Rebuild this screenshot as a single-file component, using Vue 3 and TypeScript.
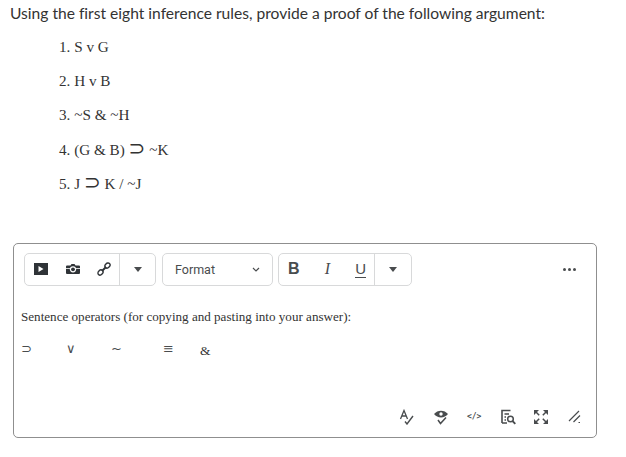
<template>
  <div class="page">
    <p class="title">Using the first eight inference rules, provide a proof of the following argument:</p>
    <ul class="premises">
      <li>1. S v G</li>
      <li>2. H v B</li>
      <li>3. ~S &amp; ~H</li>
      <li>4. (G &amp; B) <span class="horseshoe">⊃</span> ~K</li>
      <li>5. J <span class="horseshoe">⊃</span> K / ~J</li>
    </ul>

    <section class="editor">
      <div class="toolbar">
        <div class="group insert">
          <div class="tools">
            <svg class="icon" viewBox="0 0 14 14" width="14" height="14">
              <path d="M0 1h14v12H0z M4.500 4v6l5-3z" fill="#2f3337" fill-rule="evenodd" />
            </svg>
            <svg class="icon" viewBox="0 0 14 14" width="14" height="14">
              <path d="M4.500 3.500l1-1.500h3l1 1.500H13a1 1 0 0 1 1 1V11a1 1 0 0 1-1 1H1a1 1 0 0 1-1-1V4.500a1 1 0 0 1 1-1z" fill="#2f3337" />
              <path d="M0 6.500h14" stroke="#fff" stroke-width="0.800" />
              <circle cx="7" cy="7.300" r="3.100" fill="#fff" />
              <circle cx="7" cy="7.300" r="1.900" fill="#2f3337" />
            </svg>
            <svg class="icon" viewBox="0 0 14 14" width="14" height="14">
              <g fill="none" stroke="#2f3337" stroke-width="1.400">
                <ellipse cx="3.500" cy="10.500" rx="2.200" ry="2.800" transform="rotate(45 3.500 10.500)" />
                <ellipse cx="10.500" cy="3.500" rx="2.200" ry="2.800" transform="rotate(45 10.500 3.500)" />
                <path d="M5 9l4-4" stroke-width="2" />
              </g>
            </svg>
          </div>
          <div class="caret-cell"><span class="caret" /></div>
        </div>

        <div class="group format">
          <span>Format</span>
          <svg viewBox="0 0 8 5" width="8" height="5">
            <path d="M1 1l3 3 3-3" fill="none" stroke="#494c4e" stroke-width="1.200" />
          </svg>
        </div>

        <div class="group style">
          <div class="tools">
            <span class="bold">B</span>
            <span class="italic">I</span>
            <span class="underline">U</span>
          </div>
          <div class="caret-cell"><span class="caret" /></div>
        </div>

        <div class="more"><i /><i /><i /></div>
      </div>

      <div class="body">
        <p class="hint">Sentence operators (for copying and pasting into your answer):</p>
        <div class="operators">
          <span v-for="op in operators" :key="op.label" :class="op.cls">{{ op.label }}</span>
        </div>
      </div>

      <div class="status">
        <svg class="icon" viewBox="0 0 16 16" width="16" height="16">
          <path d="M1.500 10L5 1.500 8.500 10M2.800 7h4.400" fill="none" stroke="#494c4e" stroke-width="1.300" />
          <path d="M6 12.500l2 2.500 6-8" fill="none" stroke="#494c4e" stroke-width="1.400" />
        </svg>
        <svg class="icon" viewBox="0 0 16 16" width="16" height="16">
          <path d="M1 5c3.500-4.500 10.500-4.500 14 0-3.500 4.500-10.500 4.500-14 0z" fill="#494c4e" />
          <circle cx="8" cy="5" r="1.700" fill="#fff" />
          <path d="M5 11l2.500 3.500L13 8.500" fill="none" stroke="#494c4e" stroke-width="1.500" />
        </svg>
        <span class="code">&lt;/&gt;</span>
        <svg class="icon" viewBox="0 0 16 16" width="16" height="16">
          <path d="M2 14V1.500H10M2 1.500h8.500M4.500 5H9M4.500 8h1.500M4.500 11h1.500M2 14h5" fill="none" stroke="#494c4e" stroke-width="1.600" />
          <circle cx="10.500" cy="10" r="2.800" fill="none" stroke="#494c4e" stroke-width="1.500" />
          <path d="M12.500 12l2.800 2.800" stroke="#494c4e" stroke-width="1.800" />
        </svg>
        <svg class="icon" viewBox="0 0 16 16" width="16" height="16">
          <path d="M1 1h5L1 6z M15 1v5l-5-5z M1 15v-5l5 5z M15 15h-5l5-5z" fill="#494c4e" />
          <path d="M3 3l3.200 3.200M13 3L9.800 6.200M3 13l3.200-3.200M13 13L9.800 9.800" stroke="#494c4e" stroke-width="1.500" />
        </svg>
        <svg class="icon" viewBox="0 0 16 16" width="16" height="16">
          <path d="M2 12L12 2M6.500 13L13 6.500" fill="none" stroke="#494c4e" stroke-width="1.200" />
          <path d="M11.500 13.500h1.500" stroke="#494c4e" stroke-width="1.200" />
        </svg>
      </div>
    </section>
  </div>
</template>

<script setup lang="ts">
interface Operator {
  label: string
  cls: string
}

const operators: Operator[] = [
  { label: '⊃', cls: 'op-horseshoe' },
  { label: '∨', cls: 'op-vel' },
  { label: '~', cls: 'op-tilde' },
  { label: '≡', cls: 'op-equiv' },
  { label: '&', cls: 'op-amp' },
]
</script>

<style>
html,
body {
  background: #fff;
}
</style>

<style scoped>
.page {
  width: 626px;
  height: 457px;
  overflow: hidden;
  padding: 4px 0 0 10px;
  box-sizing: border-box;
  font-family: "Liberation Serif", serif;
  color: #333;
}

.title {
  margin: 0;
  font-family: Lato, sans-serif;
  font-size: 15.600px;
  font-variant-ligatures: none;
  line-height: 18px;
  white-space: nowrap;
  color: #333;
}

.premises {
  list-style: none;
  margin: 16px 0 0;
  padding: 0 0 0 49px;
  font-size: 15.200px;
  line-height: 18px;
}

.premises li {
  height: 18px;
  margin-bottom: 16.200px;
  white-space: nowrap;
}

.horseshoe {
  font-family: "DejaVu Sans", sans-serif;
  font-size: 20px;
  line-height: 0;
}

.editor {
  width: 584px;
  height: 195px;
  margin: 50px 0 0 3px;
  box-sizing: border-box;
  border: 1px solid #8f8f8f;
  border-radius: 5px;
  display: flex;
  flex-direction: column;
}

.toolbar {
  display: flex;
  align-items: center;
  gap: 6px;
  padding: 9px 10px 0;
}

.group {
  height: 33px;
  box-sizing: border-box;
  border: 1px solid #d8d9da;
  border-radius: 5px;
  display: flex;
  align-items: center;
}

.insert {
  width: 132px;
}

.format {
  width: 111px;
  justify-content: space-between;
  padding: 0 12px 0 12px;
  margin-right: -1px;
  font-family: Roboto, sans-serif;
  font-size: 12.500px;
  color: #494c4e;
}

.style {
  width: 134px;
}

.tools {
  flex: 1;
  height: 100%;
  display: flex;
  align-items: center;
  justify-content: space-between;
  padding: 0 8px 0 9px;
}

.caret-cell {
  width: 35px;
  height: 100%;
  border-left: 1px solid #d8d9da;
  display: flex;
  align-items: center;
  justify-content: center;
}

.style .caret-cell {
  width: 36px;
}

.caret {
  width: 0;
  height: 0;
  border-left: 4px solid transparent;
  border-right: 4px solid transparent;
  border-top: 5px solid #494c4e;
}

.icon {
  display: block;
}

.bold {
  font-family: "Liberation Sans", sans-serif;
  font-weight: 700;
  font-size: 16px;
  color: #494c4e;
}

.italic {
  font-family: "Liberation Serif", serif;
  font-style: italic;
  font-size: 16px;
  color: #494c4e;
}

.underline {
  font-family: "Liberation Sans", sans-serif;
  font-size: 15px;
  line-height: 16px;
  color: #494c4e;
  border-bottom: 1px solid #494c4e;
}

.more {
  margin-left: auto;
  margin-right: 10px;
  display: flex;
  gap: 2px;
}

.more i {
  width: 3px;
  height: 3px;
  border-radius: 50%;
  background: #494c4e;
}

.body {
  flex: 1;
  padding: 23px 0 0 7px;
}

.hint {
  margin: 0;
  font-size: 13.100px;
  line-height: 16px;
  white-space: nowrap;
}

.operators {
  display: flex;
  align-items: center;
  margin-top: 18px;
  height: 16px;
  font-size: 12px;
}

.operators span {
  display: block;
  white-space: nowrap;
}

.op-horseshoe,
.op-vel,
.op-tilde,
.op-equiv {
  font-family: "DejaVu Sans", sans-serif;
  font-size: 13px;
  line-height: 14px;
  margin-top: -3px;
  color: #494c4e;
}

.op-horseshoe {
  width: 45px;
}

.op-vel {
  width: 45px;
}

.op-tilde {
  width: 52px;
}

.op-equiv {
  width: 37px;
}

.op-amp {
  font-size: 13.500px;
}

.status {
  display: flex;
  align-items: center;
  justify-content: flex-end;
  gap: 17.600px;
  padding: 0 13px 12px 0;
}

.code {
  width: 16px;
  font-family: "DejaVu Sans Mono", monospace;
  font-size: 8px;
  font-weight: 700;
  text-align: center;
  color: #494c4e;
}
</style>
